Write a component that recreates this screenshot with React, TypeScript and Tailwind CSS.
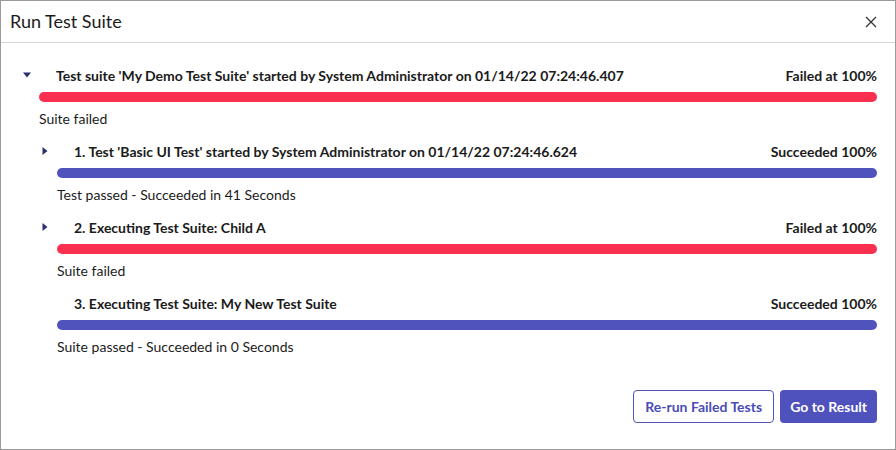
import React from "react";

type Item = {
  title: string;
  status: string;
  message: string;
  failed: boolean;
  arrow: "down" | "right" | null;
  level: number;
};

const items: Item[] = [
  {
    title: "Test suite 'My Demo Test Suite' started by System Administrator on 01/14/22 07:24:46.407",
    status: "Failed at 100%",
    message: "Suite failed",
    failed: true,
    arrow: "down",
    level: 0,
  },
  {
    title: "1. Test 'Basic UI Test' started by System Administrator on 01/14/22 07:24:46.624",
    status: "Succeeded 100%",
    message: "Test passed - Succeeded in 41 Seconds",
    failed: false,
    arrow: "right",
    level: 1,
  },
  {
    title: "2. Executing Test Suite: Child A",
    status: "Failed at 100%",
    message: "Suite failed",
    failed: true,
    arrow: "right",
    level: 1,
  },
  {
    title: "3. Executing Test Suite: My New Test Suite",
    status: "Succeeded 100%",
    message: "Suite passed - Succeeded in 0 Seconds",
    failed: false,
    arrow: null,
    level: 1,
  },
];

function Arrow({ dir }: { dir: "down" | "right" }) {
  if (dir === "down") {
    return (
      <svg width="10" height="6" viewBox="0 0 10 6" className="block">
        <polygon points="1,0.5 9,0.5 5,5.5" fill="#2d2f72" />
      </svg>
    );
  }
  return (
    <svg width="6" height="10" viewBox="0 0 6 10" className="block">
      <polygon points="0.5,1 5.5,5 0.5,9" fill="#2d2f72" />
    </svg>
  );
}

function Row({ item }: { item: Item }) {
  const indent = item.level === 0 ? "pl-[38px]" : "pl-[56px]";
  return (
    <div className={`${indent} pr-[18px]`}>
      <div className="relative flex h-5 items-center justify-between pl-[17px]">
        {item.arrow && (
          <span
            className={`absolute top-1/2 -translate-y-1/2 ${
              item.arrow === "down" ? "left-[-17px]" : "left-[-15px]"
            }`}
          >
            <Arrow dir={item.arrow} />
          </span>
        )}
        <span className="text-[14px] font-bold text-[#1b1b1b]">{item.title}</span>
        <span className="text-[14px] font-bold text-[#1b1b1b]">{item.status}</span>
      </div>
      <div
        className={`mt-[7px] h-[10px] rounded-full ${
          item.failed ? "bg-[#fb2f50]" : "bg-[#5153bd]"
        }`}
      />
      <div className="mt-[6px] flex h-5 items-center text-[14px] text-[#1b1b1b]">
        {item.message}
      </div>
    </div>
  );
}

export default function App() {
  return (
    <div
      className="flex h-[450px] w-[896px] flex-col border border-[#9a9a9a] bg-white"
      style={{ fontFamily: "Lato, 'Noto Sans', sans-serif" }}
    >
      <div className="flex h-[42px] shrink-0 items-center justify-between border-b border-[#d4d6dc] pl-[9px] pr-[18px]">
        <span className="text-[18px] text-[#1b1b1b]">Run Test Suite</span>
        <svg width="12" height="12" viewBox="0 0 12 12" className="block">
          <path d="M1 1 L11 11 M11 1 L1 11" stroke="#333" strokeWidth="1.3" />
        </svg>
      </div>
      <div className="flex flex-col gap-[13px] pt-[22px]">
        {items.map((it, i) => (
          <Row key={i} item={it} />
        ))}
      </div>
      <div className="mt-auto flex justify-end gap-[6px] pb-[26px] pr-[18px]">
        <button className="h-[33px] rounded-[4px] border border-[#5153bd] bg-white px-[11px] text-[14px] font-bold text-[#4a4cb8]">
          Re-run Failed Tests
        </button>
        <button className="h-[33px] rounded-[4px] bg-[#4f51bd] px-[10px] text-[14px] font-bold text-white">
          Go to Result
        </button>
      </div>
    </div>
  );
}
